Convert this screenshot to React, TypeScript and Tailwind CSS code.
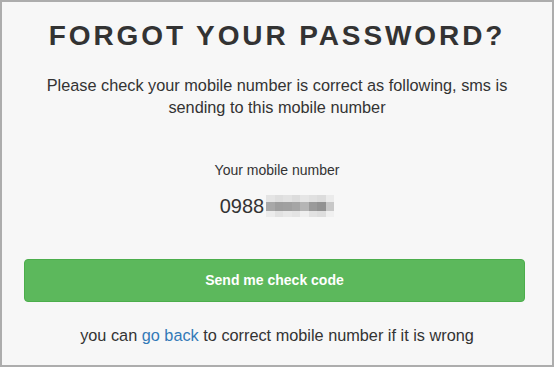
const blurRows = [
  ['#e4e4e4', '#dedede', '#e2e2e2', '#dcdcdc', '#e5e5e5', '#e0e0e0', '#dcdcdc', '#ebebeb'],
  ['#a8a8a8', '#9e9e9e', '#a0a0a0', '#a5a5a5', '#b5b5b5', '#9a9a9a', '#929292', '#c8c8c8'],
  ['#ececec', '#e2e2e2', '#e8e8e8', '#e4e4e4', '#efefef', '#e2e2e2', '#dedede', '#f0f0f0'],
]
const rowHeights = [7, 9, 6]

export default function App() {
  return (
    <div className="w-[554px] h-[367px] border-2 border-[#adadad] bg-[#f7f7f7] font-['Liberation_Sans',Arial,sans-serif] text-[#333]">
      <div className="flex flex-col items-center px-[22px]">
        <h1 className="mt-[17px] text-[28px] leading-[34px] font-bold tracking-[2.9px] text-[#333]">
          FORGOT YOUR PASSWORD?
        </h1>
        <p className="mt-[21px] text-center text-[16.3px] leading-[22px]">
          Please check your mobile number is correct as following, sms is sending to this mobile number
        </p>
        <div className="mt-[44px] text-[14px] leading-[16px]">Your mobile number</div>
        <div className="mt-[16px] flex items-center">
          <span className="text-[20px] leading-[24px]">0988</span>
          <div className="flex flex-col ml-[2px]">
            {blurRows.map((row, i) => (
              <div key={i} className="flex">
                {row.map((c, j) => (
                  <div key={j} style={{ backgroundColor: c, height: rowHeights[i] }} className="w-[8.5px]" />
                ))}
              </div>
            ))}
          </div>
        </div>
        <button className="mt-[41px] self-stretch mr-[5px] h-[43px] rounded-[4px] bg-[#5cb85c] border border-[#4cae4c] text-white font-bold text-[14px]">
          Send me check code
        </button>
        <p className="mt-[22px] text-[16.3px] leading-[22px]">
          you can <a className="text-[#337ab7]" href="#">go back</a> to correct mobile number if it is wrong
        </p>
      </div>
    </div>
  )
}
